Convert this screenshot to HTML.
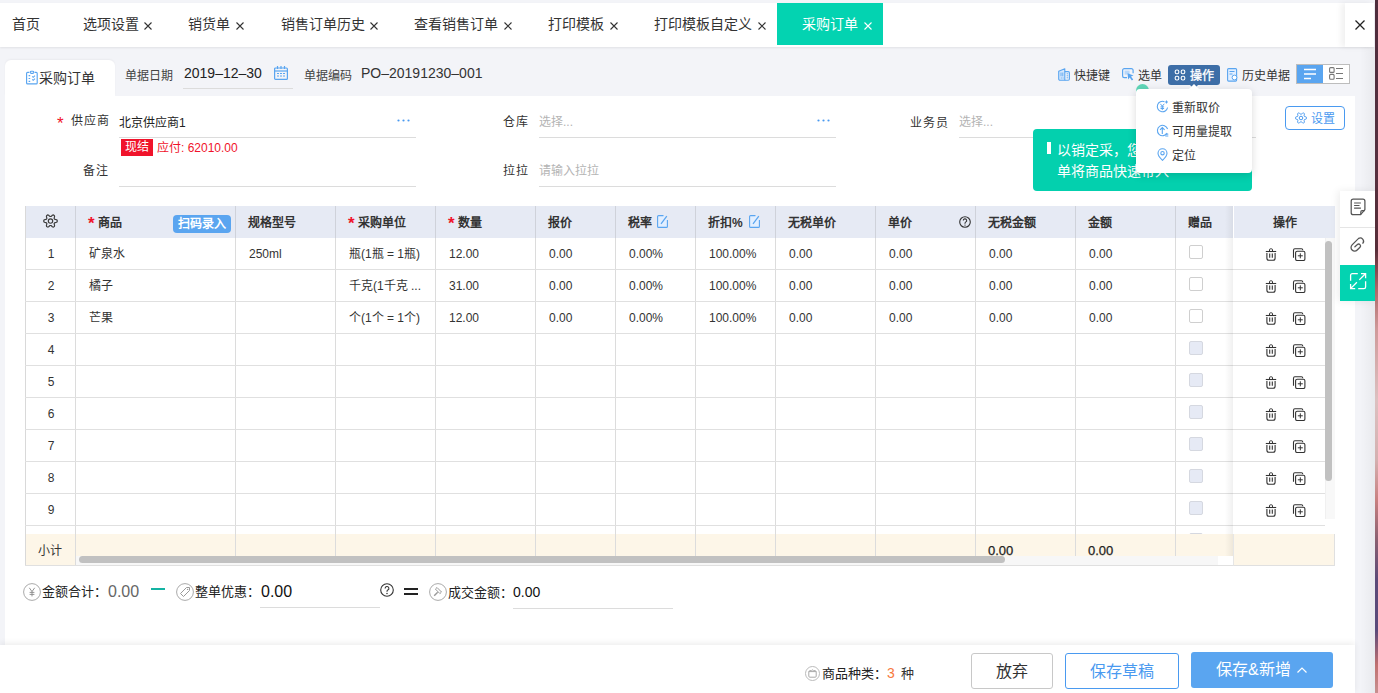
<!DOCTYPE html>
<html lang="zh-CN"><head><meta charset="utf-8">
<style>
*{box-sizing:border-box;margin:0;padding:0}
html,body{width:1378px;height:693px;overflow:hidden}
body{position:relative;background:#f3f4f8;font-family:"Liberation Sans",sans-serif;color:#333;font-size:12px}
.a{position:absolute;white-space:nowrap}
svg{display:block}
#tabbar{left:0;top:3px;width:1374px;height:44px;background:#fff;box-shadow:0 1px 2px rgba(0,0,0,.08)}
.tab{position:absolute;top:14px;font-size:14px;line-height:20px;color:#333}
.x{position:absolute;top:22px;width:8px;height:8px}
#acttab{left:777px;top:3px;width:106px;height:42px;background:#03d3b1}
#closebtn{left:1345px;top:3px;width:29px;height:44px;background:#fff;box-shadow:-4px 0 6px rgba(0,0,0,.06)}
#strip{left:1375px;top:0;width:3px;height:693px;background:linear-gradient(#4e2c3c 0,#55303f 150px,#5a2e3a 250px,#b06a6a 290px,#cf9a9a 330px,#dcc0c0 400px,#d4b0b0 460px,#c88080 500px,#8a6070 540px,#5c4a78 580px,#5a4a7a 630px,#c07070 665px,#c89090 693px)}
#subtab{left:5px;top:60px;width:110px;height:36px;background:#fff;border-radius:6px 6px 0 0;box-shadow:0 -1px 2px rgba(0,0,0,.04)}
#panel{left:5px;top:96px;width:1350px;height:560px;background:#fff}
#footer{left:0;top:645px;width:1355px;height:48px;background:#fff;box-shadow:0 -2px 6px rgba(0,0,0,.07)}
.lbl{font-size:12px;color:#333}
.uline{position:absolute;height:1px;background:#dcdcdc}
.ph{color:#b4b4b4;font-size:12px}
/* table */
.hdr{background:#e6eaf4}
.vl{position:absolute;width:1px;background:#dcdcdc}
.hl{position:absolute;height:1px;background:#e0e0e0}
.th{position:absolute;font-size:12px;font-weight:bold;color:#333;line-height:16px}
.td{position:absolute;font-size:12px;color:#333;line-height:16px}
.req{color:#f0132b}
.cb{position:absolute;width:14px;height:14px;border:1px solid #cfcfcf;border-radius:2px;background:#fff}
.cbd{background:#e6eaf5;border-color:#d5d8e0}
</style></head><body>

<!-- tab bar -->
<div id="tabbar" class="a"></div>
<div class="a tab" style="left:12px">首页</div>
<div class="a tab" style="left:83px">选项设置</div>
<div class="a tab" style="left:188px">销货单</div>
<div class="a tab" style="left:281px">销售订单历史</div>
<div class="a tab" style="left:414px">查看销售订单</div>
<div class="a tab" style="left:548px">打印模板</div>
<div class="a tab" style="left:654px">打印模板自定义</div>
<div id="acttab" class="a"></div>
<div class="a tab" style="left:802px;color:#fff">采购订单</div>
<svg class="a x" style="left:144px" viewBox="0 0 8 8"><path d="M0.5 .5L7.5 7.5M7.5 .5L.5 7.5" stroke="#333" stroke-width="1.1"/></svg>
<svg class="a x" style="left:236px" viewBox="0 0 8 8"><path d="M0.5 .5L7.5 7.5M7.5 .5L.5 7.5" stroke="#333" stroke-width="1.1"/></svg>
<svg class="a x" style="left:370px" viewBox="0 0 8 8"><path d="M0.5 .5L7.5 7.5M7.5 .5L.5 7.5" stroke="#333" stroke-width="1.1"/></svg>
<svg class="a x" style="left:504px" viewBox="0 0 8 8"><path d="M0.5 .5L7.5 7.5M7.5 .5L.5 7.5" stroke="#333" stroke-width="1.1"/></svg>
<svg class="a x" style="left:610px" viewBox="0 0 8 8"><path d="M0.5 .5L7.5 7.5M7.5 .5L.5 7.5" stroke="#333" stroke-width="1.1"/></svg>
<svg class="a x" style="left:758px" viewBox="0 0 8 8"><path d="M0.5 .5L7.5 7.5M7.5 .5L.5 7.5" stroke="#333" stroke-width="1.1"/></svg>
<svg class="a x" style="left:864px" viewBox="0 0 8 8"><path d="M0.5 .5L7.5 7.5M7.5 .5L.5 7.5" stroke="#fff" stroke-width="1.1"/></svg>
<div id="closebtn" class="a"></div>
<svg class="a" style="left:1355px;top:20px;width:10px;height:10px" viewBox="0 0 10 10"><path d="M.5 .5L9.5 9.5M9.5 .5L.5 9.5" stroke="#222" stroke-width="1.3"/></svg>
<div class="a" style="left:1360px;top:47px;width:15px;height:646px;background:linear-gradient(to right,rgba(0,0,0,0),rgba(0,0,0,.045))"></div>
<div id="strip" class="a"></div>

<!-- sub tab + info row -->
<div id="subtab" class="a"></div>
<div id="panel" class="a"></div>
<div id="footer" class="a"></div>


<!-- sub tab content -->
<svg class="a" style="left:20px;top:64px;width:30px;height:26px" viewBox="0 0 30 26"><path d="M9.3 8.3H7.6a1 1 0 0 0-1 1v9.6a1 1 0 0 0 1 1h8.6a1 1 0 0 0 1-1V9.3a1 1 0 0 0-1-1h-1.6" fill="none" stroke="#5aa5f0" stroke-width="1.15"/><rect x="10.3" y="7.2" width="3.4" height="2.2" rx=".9" fill="none" stroke="#5aa5f0" stroke-width="1.1"/><path d="M8.6 11.6h1.6M8.6 14.5h1.6M8.6 17.4h1.6" stroke="#5aa5f0" stroke-width="1.1"/><path d="M12.2 12.4l1 .9 1.8-1.6M12.2 15.4l1 .9 1.8-1.6" fill="none" stroke="#5aa5f0" stroke-width="1.1"/></svg>
<div class="a" style="left:39px;top:68px;font-size:14px;line-height:20px;color:#333">采购订单</div>

<div class="a lbl" style="left:125px;top:68px;line-height:16px;color:#444">单据日期</div>
<div class="a" style="left:184px;top:64px;font-size:14px;line-height:18px;color:#222">2019–12–30</div>
<svg class="a" style="left:274px;top:66px;width:14px;height:14px" viewBox="0 0 14 14"><rect x=".6" y="2" width="12.8" height="11.4" rx="1" fill="none" stroke="#5aa5f0" stroke-width="1.2"/><path d="M.6 5h12.8" stroke="#5aa5f0" stroke-width="1.2"/><path d="M3.5 0v3M10.5 0v3M7 0v3" stroke="#5aa5f0" stroke-width="1.2"/><path d="M3 7.5h2M6 7.5h2M9 7.5h2M3 10h2M6 10h2M9 10h2" stroke="#5aa5f0" stroke-width="1"/></svg>
<div class="uline" style="left:183px;top:88px;width:110px"></div>
<div class="a lbl" style="left:304px;top:68px;line-height:16px;color:#444">单据编码</div>
<div class="a" style="left:361px;top:64px;font-size:14px;line-height:18px;color:#333">PO–20191230–001</div>

<!-- toolbar -->
<svg class="a" style="left:1058px;top:68px;width:12px;height:13px" viewBox="0 0 12 13"><path d="M.7 3.2L6.8.8v11.5H1.9a1.2 1.2 0 0 1-1.2-1.2z" fill="#d6e8fd" stroke="#5aa5f0" stroke-width="1.1" stroke-linejoin="round"/><path d="M6.8 3.6h3.4a1.2 1.2 0 0 1 1.2 1.2v6.3a1.2 1.2 0 0 1-1.2 1.2H6.8" fill="none" stroke="#5aa5f0" stroke-width="1.1"/><path d="M3 4.5v3.8M4.8 4.5v3.8M2.8 10h1M4.6 10h1M8.6 5.8h1.6M8.6 7.8h1.6M8.6 9.8h1.6" stroke="#5aa5f0" stroke-width=".9"/></svg>
<div class="a lbl" style="left:1074px;top:68px;line-height:16px">快捷键</div>
<svg class="a" style="left:1122px;top:68px;width:12px;height:13px" viewBox="0 0 12 13"><path d="M5 9.6H2.3A1.7 1.7 0 0 1 .6 7.9V2.3A1.7 1.7 0 0 1 2.3.6h7.1a1.7 1.7 0 0 1 1.7 1.7v3" fill="none" stroke="#5aa5f0" stroke-width="1.2"/><rect x="2.6" y="2.6" width="5" height="4" fill="#b9d8fa"/><path d="M5.6 5.2l5.9 2.4-2.5.9 2.2 2.9-1.3 1-2.2-2.9-1.6 1.9z" fill="#5aa5f0"/></svg>
<div class="a lbl" style="left:1138px;top:68px;line-height:16px">选单</div>
<div class="a" style="left:1168px;top:65px;width:52px;height:20px;background:#3d6ea7;border-radius:3px"></div>
<svg class="a" style="left:1189px;top:84px;width:10px;height:5px" viewBox="0 0 10 5"><path d="M0 0h10L5 5z" fill="#3d6ea7"/></svg>
<svg class="a" style="left:1174px;top:69px;width:12px;height:12px" viewBox="0 0 12 12"><g fill="none" stroke="#fff" stroke-width="1.1"><rect x="1.2" y="1" width="3.6" height="3.8" rx="1.5"/><rect x="7.2" y="1" width="3.6" height="3.8" rx="1.5"/><rect x="1.2" y="7.2" width="3.6" height="3.8" rx="1.5"/><rect x="7.2" y="7.2" width="3.6" height="3.8" rx="1.5"/></g></svg>
<div class="a" style="left:1190px;top:68px;font-size:12px;line-height:16px;color:#fff;-webkit-text-stroke:.35px #fff">操作</div>
<svg class="a" style="left:1227px;top:68px;width:11px;height:14px" viewBox="0 0 11 14"><rect x=".6" y=".6" width="9" height="12.5" rx="1" fill="#e3efff" stroke="#5aa5f0" stroke-width="1.1"/><path d="M2.5 3.5h5M2.5 6h3" stroke="#5aa5f0" stroke-width="1"/><circle cx="7.5" cy="9.5" r="2.4" fill="#fff" stroke="#5aa5f0" stroke-width="1"/></svg>
<div class="a lbl" style="left:1242px;top:68px;line-height:16px">历史单据</div>
<div class="a" style="left:1296px;top:64px;width:54px;height:20px;border:1px solid #bdbdbd;background:#fff"></div>
<div class="a" style="left:1297px;top:65px;width:26px;height:18px;background:#5aa5f0"></div>
<svg class="a" style="left:1303px;top:68px;width:14px;height:12px" viewBox="0 0 14 12"><path d="M1 1.5h12M1 6h12M1 10.5h7" stroke="#fff" stroke-width="1.3"/></svg>
<svg class="a" style="left:1329px;top:67px;width:15px;height:13px" viewBox="0 0 15 13"><g fill="none" stroke="#777" stroke-width="1.1"><rect x=".6" y=".6" width="4.5" height="4.8" rx="1"/><rect x=".6" y="7.4" width="4.5" height="4.8" rx="1"/></g><path d="M7 1.5h7M7 6.5h7M7 11.5h7" stroke="#777" stroke-width="1.1"/></svg>

<!-- form -->
<div class="a req" style="left:57px;top:116px;font-size:17px;line-height:16px">*</div>
<div class="a lbl" style="left:71px;top:113px;line-height:16px;letter-spacing:1px">供应商</div>
<div class="a" style="left:119px;top:115px;font-size:12px;line-height:16px;color:#222">北京供应商1</div>
<svg class="a" style="left:397px;top:119px;width:13px;height:3px" viewBox="0 0 13 3"><circle cx="1.5" cy="1.5" r="1.1" fill="#4a9af0"/><circle cx="6.5" cy="1.5" r="1.1" fill="#4a9af0"/><circle cx="11.5" cy="1.5" r="1.1" fill="#4a9af0"/></svg>
<div class="uline" style="left:119px;top:137px;width:297px"></div>
<div class="a" style="left:121px;top:139px;width:32px;height:17px;background:#f0132b;color:#fff;font-size:12px;line-height:17px;text-align:center">现结</div>
<div class="a" style="left:157px;top:140px;font-size:12px;line-height:16px;color:#f0132b">应付: 62010.00</div>
<div class="a lbl" style="left:83px;top:163px;line-height:16px;letter-spacing:1px">备注</div>
<div class="uline" style="left:119px;top:186px;width:297px"></div>

<div class="a lbl" style="left:503px;top:114px;line-height:16px;letter-spacing:1px">仓库</div>
<div class="a ph" style="left:539px;top:114px;line-height:16px">选择...</div>
<svg class="a" style="left:817px;top:119px;width:13px;height:3px" viewBox="0 0 13 3"><circle cx="1.5" cy="1.5" r="1.1" fill="#4a9af0"/><circle cx="6.5" cy="1.5" r="1.1" fill="#4a9af0"/><circle cx="11.5" cy="1.5" r="1.1" fill="#4a9af0"/></svg>
<div class="uline" style="left:539px;top:137px;width:297px"></div>
<div class="a lbl" style="left:503px;top:163px;line-height:16px;letter-spacing:1px">拉拉</div>
<div class="a ph" style="left:539px;top:163px;line-height:16px">请输入拉拉</div>
<div class="uline" style="left:539px;top:186px;width:297px"></div>

<div class="a lbl" style="left:910px;top:115px;line-height:16px;letter-spacing:1px">业务员</div>
<div class="a ph" style="left:959px;top:114px;line-height:16px">选择...</div>
<div class="uline" style="left:959px;top:137px;width:297px"></div>

<div class="a" style="left:1285px;top:106px;width:60px;height:24px;border:1px solid #4a9af0;border-radius:4px"></div>
<svg class="a" style="left:1295px;top:112px;width:12px;height:12px" viewBox="0 0 12 12"><path d="M11.6 6.0L11.6 6.6L11.0 7.1L10.1 7.3L9.5 7.5L9.3 7.9L9.1 8.2L9.2 8.9L9.4 9.8L9.3 10.5L8.8 10.8L8.3 11.1L7.6 10.9L6.9 10.2L6.4 9.8L6.0 9.8L5.6 9.8L5.1 10.2L4.4 10.9L3.7 11.1L3.2 10.8L2.7 10.5L2.6 9.8L2.8 8.9L2.9 8.2L2.7 7.9L2.5 7.5L1.9 7.3L1.0 7.1L0.4 6.6L0.4 6.0L0.4 5.4L1.0 4.9L1.9 4.7L2.5 4.5L2.7 4.1L2.9 3.8L2.8 3.1L2.6 2.2L2.7 1.5L3.2 1.2L3.7 0.9L4.4 1.1L5.1 1.8L5.6 2.2L6.0 2.2L6.4 2.2L6.9 1.8L7.6 1.1L8.3 0.9L8.8 1.2L9.3 1.5L9.4 2.2L9.2 3.1L9.1 3.8L9.3 4.1L9.5 4.5L10.1 4.7L11.0 4.9L11.6 5.4Z" stroke-linejoin="round" fill="none" stroke="#4a9af0" stroke-width="1"/><circle cx="6" cy="6" r="1.8" fill="none" stroke="#4a9af0" stroke-width="1"/></svg>
<div class="a" style="left:1311px;top:111px;font-size:12px;line-height:16px;color:#4a9af0">设置</div>

<!-- TABLE -->
<div class="a hdr" style="left:25px;top:206px;width:1310px;height:32px"></div>
<div class="vl" style="left:75px;top:206px;height:32px;background:#cfd2da"></div>
<div class="vl" style="left:235px;top:206px;height:32px;background:#cfd2da"></div>
<div class="vl" style="left:335px;top:206px;height:32px;background:#cfd2da"></div>
<div class="vl" style="left:435px;top:206px;height:32px;background:#cfd2da"></div>
<div class="vl" style="left:535px;top:206px;height:32px;background:#cfd2da"></div>
<div class="vl" style="left:615px;top:206px;height:32px;background:#cfd2da"></div>
<div class="vl" style="left:695px;top:206px;height:32px;background:#cfd2da"></div>
<div class="vl" style="left:775px;top:206px;height:32px;background:#cfd2da"></div>
<div class="vl" style="left:875px;top:206px;height:32px;background:#cfd2da"></div>
<div class="vl" style="left:975px;top:206px;height:32px;background:#cfd2da"></div>
<div class="vl" style="left:1075px;top:206px;height:32px;background:#cfd2da"></div>
<div class="vl" style="left:1175px;top:206px;height:32px;background:#cfd2da"></div>
<div class="vl" style="left:25px;top:206px;height:360px;background:#d9d9d9"></div>
<div class="vl" style="left:75px;top:238px;height:296px"></div>
<div class="vl" style="left:235px;top:238px;height:296px"></div>
<div class="vl" style="left:335px;top:238px;height:296px"></div>
<div class="vl" style="left:435px;top:238px;height:296px"></div>
<div class="vl" style="left:535px;top:238px;height:296px"></div>
<div class="vl" style="left:615px;top:238px;height:296px"></div>
<div class="vl" style="left:695px;top:238px;height:296px"></div>
<div class="vl" style="left:775px;top:238px;height:296px"></div>
<div class="vl" style="left:875px;top:238px;height:296px"></div>
<div class="vl" style="left:975px;top:238px;height:296px"></div>
<div class="vl" style="left:1075px;top:238px;height:296px"></div>
<div class="vl" style="left:1175px;top:238px;height:296px"></div>
<div class="hl" style="left:25px;top:269px;width:1208px"></div>
<div class="hl" style="left:25px;top:301px;width:1208px"></div>
<div class="hl" style="left:25px;top:333px;width:1208px"></div>
<div class="hl" style="left:25px;top:365px;width:1208px"></div>
<div class="hl" style="left:25px;top:397px;width:1208px"></div>
<div class="hl" style="left:25px;top:429px;width:1208px"></div>
<div class="hl" style="left:25px;top:461px;width:1208px"></div>
<div class="hl" style="left:25px;top:493px;width:1208px"></div>
<div class="hl" style="left:25px;top:525px;width:1208px"></div>
<svg class="a" style="left:43px;top:214px;width:15px;height:14px" viewBox="0 0 15 14"><path d="M14.2 7.0L14.2 7.7L13.5 8.3L12.3 8.6L11.6 8.8L11.4 9.2L11.1 9.6L11.3 10.4L11.6 11.5L11.4 12.4L10.9 12.8L10.2 13.1L9.4 12.8L8.6 12.0L8.0 11.5L7.5 11.5L7.0 11.5L6.4 12.0L5.6 12.8L4.8 13.1L4.2 12.8L3.6 12.4L3.4 11.5L3.7 10.4L3.9 9.6L3.6 9.2L3.4 8.8L2.7 8.6L1.5 8.3L0.8 7.7L0.8 7.0L0.8 6.3L1.5 5.7L2.7 5.4L3.4 5.2L3.6 4.8L3.9 4.4L3.7 3.6L3.4 2.5L3.6 1.6L4.1 1.2L4.8 0.9L5.6 1.2L6.4 2.0L7.0 2.5L7.5 2.5L8.0 2.5L8.6 2.0L9.4 1.2L10.2 0.9L10.9 1.2L11.4 1.6L11.6 2.5L11.3 3.6L11.1 4.4L11.4 4.8L11.6 5.2L12.3 5.4L13.5 5.7L14.2 6.3Z" fill="none" stroke="#3a3a3a" stroke-width="1.15" stroke-linejoin="round"/><circle cx="7.5" cy="7" r="2.2" fill="none" stroke="#3a3a3a" stroke-width="1.15"/></svg>
<div class="th req" style="left:88px;top:216px;font-size:17px;font-weight:bold">*</div>
<div class="th" style="left:98px;top:215px">商品</div>
<div class="a" style="left:173px;top:215px;width:58px;height:18px;background:#5aa5f0;border-radius:4px;color:#fff;font-size:12px;font-weight:bold;line-height:18px;text-align:center">扫码录入</div>
<div class="th" style="left:248px;top:215px">规格型号</div>
<div class="th req" style="left:348px;top:216px;font-size:17px;font-weight:bold">*</div>
<div class="th" style="left:358px;top:215px">采购单位</div>
<div class="th req" style="left:448px;top:216px;font-size:17px;font-weight:bold">*</div>
<div class="th" style="left:458px;top:215px">数量</div>
<div class="th" style="left:548px;top:215px">报价</div>
<div class="th" style="left:628px;top:215px">税率</div>
<svg class="a" style="left:657px;top:215px;width:11px;height:13px" viewBox="0 0 11 13"><path d="M6.5 .6H1.6a1 1 0 0 0-1 1v9.8a1 1 0 0 0 1 1h7.8a1 1 0 0 0 1-1V5" fill="#e3efff" stroke="#5aa5f0" stroke-width="1.1"/><path d="M9.8 1.2L4 8.8" stroke="#5aa5f0" stroke-width="1.3"/></svg>
<div class="th" style="left:708px;top:215px">折扣%</div>
<svg class="a" style="left:749px;top:215px;width:11px;height:13px" viewBox="0 0 11 13"><path d="M6.5 .6H1.6a1 1 0 0 0-1 1v9.8a1 1 0 0 0 1 1h7.8a1 1 0 0 0 1-1V5" fill="#e3efff" stroke="#5aa5f0" stroke-width="1.1"/><path d="M9.8 1.2L4 8.8" stroke="#5aa5f0" stroke-width="1.3"/></svg>
<div class="th" style="left:788px;top:215px">无税单价</div>
<div class="th" style="left:888px;top:215px">单价</div>
<svg class="a" style="left:959px;top:216px;width:12px;height:12px" viewBox="0 0 12 12"><circle cx="6" cy="6" r="5.3" fill="none" stroke="#333" stroke-width="1.1"/><path d="M4.3 4.6a1.7 1.7 0 1 1 2.4 1.5c-.5.3-.7.6-.7 1.2v.4" fill="none" stroke="#333" stroke-width="1.1"/><circle cx="6" cy="9.1" r=".7" fill="#333"/></svg>
<div class="th" style="left:988px;top:215px">无税金额</div>
<div class="th" style="left:1088px;top:215px">金额</div>
<div class="th" style="left:1188px;top:215px">赠品</div>
<div class="td" style="left:26px;width:50px;text-align:center;top:246px">1</div>
<div class="td" style="left:89px;top:246px">矿泉水</div>
<div class="td" style="left:249px;top:246px">250ml</div>
<div class="td" style="left:349px;top:246px">瓶(1瓶 = 1瓶)</div>
<div class="td" style="left:449px;top:246px">12.00</div>
<div class="td" style="left:549px;top:246px">0.00</div>
<div class="td" style="left:629px;top:246px">0.00%</div>
<div class="td" style="left:709px;top:246px">100.00%</div>
<div class="td" style="left:789px;top:246px">0.00</div>
<div class="td" style="left:889px;top:246px">0.00</div>
<div class="td" style="left:989px;top:246px">0.00</div>
<div class="td" style="left:1089px;top:246px">0.00</div>
<div class="cb" style="left:1189px;top:245px"></div>
<div class="td" style="left:26px;width:50px;text-align:center;top:278px">2</div>
<div class="td" style="left:89px;top:278px">橘子</div>
<div class="td" style="left:349px;top:278px">千克(1千克 ...</div>
<div class="td" style="left:449px;top:278px">31.00</div>
<div class="td" style="left:549px;top:278px">0.00</div>
<div class="td" style="left:629px;top:278px">0.00%</div>
<div class="td" style="left:709px;top:278px">100.00%</div>
<div class="td" style="left:789px;top:278px">0.00</div>
<div class="td" style="left:889px;top:278px">0.00</div>
<div class="td" style="left:989px;top:278px">0.00</div>
<div class="td" style="left:1089px;top:278px">0.00</div>
<div class="cb" style="left:1189px;top:277px"></div>
<div class="td" style="left:26px;width:50px;text-align:center;top:310px">3</div>
<div class="td" style="left:89px;top:310px">芒果</div>
<div class="td" style="left:349px;top:310px">个(1个 = 1个)</div>
<div class="td" style="left:449px;top:310px">12.00</div>
<div class="td" style="left:549px;top:310px">0.00</div>
<div class="td" style="left:629px;top:310px">0.00%</div>
<div class="td" style="left:709px;top:310px">100.00%</div>
<div class="td" style="left:789px;top:310px">0.00</div>
<div class="td" style="left:889px;top:310px">0.00</div>
<div class="td" style="left:989px;top:310px">0.00</div>
<div class="td" style="left:1089px;top:310px">0.00</div>
<div class="cb" style="left:1189px;top:309px"></div>
<div class="td" style="left:26px;width:50px;text-align:center;top:342px">4</div>
<div class="cb cbd" style="left:1189px;top:341px"></div>
<div class="td" style="left:26px;width:50px;text-align:center;top:374px">5</div>
<div class="cb cbd" style="left:1189px;top:373px"></div>
<div class="td" style="left:26px;width:50px;text-align:center;top:406px">6</div>
<div class="cb cbd" style="left:1189px;top:405px"></div>
<div class="td" style="left:26px;width:50px;text-align:center;top:438px">7</div>
<div class="cb cbd" style="left:1189px;top:437px"></div>
<div class="td" style="left:26px;width:50px;text-align:center;top:470px">8</div>
<div class="cb cbd" style="left:1189px;top:469px"></div>
<div class="td" style="left:26px;width:50px;text-align:center;top:502px">9</div>
<div class="cb cbd" style="left:1189px;top:501px"></div>
<div class="a" style="left:25px;top:526px;width:1208px;height:8px;overflow:hidden"><div class="cb cbd" style="left:1164px;top:7px"></div></div>
<div class="a" style="left:26px;top:534px;width:1207px;height:32px;background:#fdf6e8"></div>
<div class="vl" style="left:75px;top:534px;height:22px;background:#dcdcdc"></div>
<div class="vl" style="left:235px;top:534px;height:22px;background:#dcdcdc"></div>
<div class="vl" style="left:335px;top:534px;height:22px;background:#dcdcdc"></div>
<div class="vl" style="left:435px;top:534px;height:22px;background:#dcdcdc"></div>
<div class="vl" style="left:535px;top:534px;height:22px;background:#dcdcdc"></div>
<div class="vl" style="left:615px;top:534px;height:22px;background:#dcdcdc"></div>
<div class="vl" style="left:695px;top:534px;height:22px;background:#dcdcdc"></div>
<div class="vl" style="left:775px;top:534px;height:22px;background:#dcdcdc"></div>
<div class="vl" style="left:875px;top:534px;height:22px;background:#dcdcdc"></div>
<div class="vl" style="left:975px;top:534px;height:22px;background:#dcdcdc"></div>
<div class="vl" style="left:1075px;top:534px;height:22px;background:#dcdcdc"></div>
<div class="vl" style="left:1175px;top:534px;height:22px;background:#dcdcdc"></div>
<div class="vl" style="left:75px;top:534px;height:32px;background:#dcdcdc"></div>
<div class="td" style="left:25px;width:50px;text-align:center;top:543px">小计</div>
<div class="td" style="left:988px;top:543px;font-weight:normal;font-size:13px;color:#222;-webkit-text-stroke:.25px #222">0.00</div>
<div class="td" style="left:1088px;top:543px;font-weight:normal;font-size:13px;color:#222;-webkit-text-stroke:.25px #222">0.00</div>
<div class="a" style="left:76px;top:556px;width:1142px;height:9px;background:#f7f7f7"></div>
<div class="a" style="left:1218px;top:556px;width:15px;height:9px;background:#fff"></div>
<div class="a" style="left:79px;top:556px;width:926px;height:7px;background:#c1c1c1;border-radius:4px"></div>
<div class="hl" style="left:25px;top:565px;width:1310px;background:#e0e0e0"></div>
<div class="a" style="left:1233px;top:206px;width:102px;height:360px;background:#fff"></div>
<div class="a" style="left:1225px;top:206px;width:8px;height:350px;background:linear-gradient(to right,rgba(0,0,0,0),rgba(0,0,0,.06))"></div>
<div class="a hdr" style="left:1234px;top:206px;width:101px;height:32px"></div>
<div class="th" style="left:1273px;top:215px">操作</div>
<div class="hl" style="left:1233px;top:269px;width:92px"></div>
<div class="hl" style="left:1233px;top:301px;width:92px"></div>
<div class="hl" style="left:1233px;top:333px;width:92px"></div>
<div class="hl" style="left:1233px;top:365px;width:92px"></div>
<div class="hl" style="left:1233px;top:397px;width:92px"></div>
<div class="hl" style="left:1233px;top:429px;width:92px"></div>
<div class="hl" style="left:1233px;top:461px;width:92px"></div>
<div class="hl" style="left:1233px;top:493px;width:92px"></div>
<div class="hl" style="left:1233px;top:525px;width:92px"></div>
<svg class="a" style="left:1265px;top:248px;width:12px;height:13px" viewBox="0 0 12 13"><path d="M.8 3.5h10.4" stroke="#333" stroke-width="1.1"/><path d="M4.5 3.3V1.8a1 1 0 0 1 1-1h1a1 1 0 0 1 1 1v1.5" fill="none" stroke="#333" stroke-width="1"/><path d="M1.9 5v5.2a2 2 0 0 0 2 2h4.2a2 2 0 0 0 2-2V5" fill="none" stroke="#333" stroke-width="1.1"/><path d="M4.7 5.6v4.2M7.3 5.6v4.2" stroke="#333" stroke-width="1.1"/></svg>
<svg class="a" style="left:1292px;top:248px;width:14px;height:13px" viewBox="0 0 14 13"><path d="M1.5 9.8V2.2a1.4 1.4 0 0 1 1.4-1.4h6.5a1.4 1.4 0 0 1 1.4 1.4" fill="none" stroke="#333" stroke-width="1.1"/><rect x="3.6" y="3.2" width="9.3" height="9.3" rx="1.6" fill="#fff" stroke="#333" stroke-width="1.1"/><path d="M5.8 7.8h5M8.3 5.3v5" stroke="#333" stroke-width="1"/></svg>
<svg class="a" style="left:1265px;top:280px;width:12px;height:13px" viewBox="0 0 12 13"><path d="M.8 3.5h10.4" stroke="#333" stroke-width="1.1"/><path d="M4.5 3.3V1.8a1 1 0 0 1 1-1h1a1 1 0 0 1 1 1v1.5" fill="none" stroke="#333" stroke-width="1"/><path d="M1.9 5v5.2a2 2 0 0 0 2 2h4.2a2 2 0 0 0 2-2V5" fill="none" stroke="#333" stroke-width="1.1"/><path d="M4.7 5.6v4.2M7.3 5.6v4.2" stroke="#333" stroke-width="1.1"/></svg>
<svg class="a" style="left:1292px;top:280px;width:14px;height:13px" viewBox="0 0 14 13"><path d="M1.5 9.8V2.2a1.4 1.4 0 0 1 1.4-1.4h6.5a1.4 1.4 0 0 1 1.4 1.4" fill="none" stroke="#333" stroke-width="1.1"/><rect x="3.6" y="3.2" width="9.3" height="9.3" rx="1.6" fill="#fff" stroke="#333" stroke-width="1.1"/><path d="M5.8 7.8h5M8.3 5.3v5" stroke="#333" stroke-width="1"/></svg>
<svg class="a" style="left:1265px;top:312px;width:12px;height:13px" viewBox="0 0 12 13"><path d="M.8 3.5h10.4" stroke="#333" stroke-width="1.1"/><path d="M4.5 3.3V1.8a1 1 0 0 1 1-1h1a1 1 0 0 1 1 1v1.5" fill="none" stroke="#333" stroke-width="1"/><path d="M1.9 5v5.2a2 2 0 0 0 2 2h4.2a2 2 0 0 0 2-2V5" fill="none" stroke="#333" stroke-width="1.1"/><path d="M4.7 5.6v4.2M7.3 5.6v4.2" stroke="#333" stroke-width="1.1"/></svg>
<svg class="a" style="left:1292px;top:312px;width:14px;height:13px" viewBox="0 0 14 13"><path d="M1.5 9.8V2.2a1.4 1.4 0 0 1 1.4-1.4h6.5a1.4 1.4 0 0 1 1.4 1.4" fill="none" stroke="#333" stroke-width="1.1"/><rect x="3.6" y="3.2" width="9.3" height="9.3" rx="1.6" fill="#fff" stroke="#333" stroke-width="1.1"/><path d="M5.8 7.8h5M8.3 5.3v5" stroke="#333" stroke-width="1"/></svg>
<svg class="a" style="left:1265px;top:344px;width:12px;height:13px" viewBox="0 0 12 13"><path d="M.8 3.5h10.4" stroke="#333" stroke-width="1.1"/><path d="M4.5 3.3V1.8a1 1 0 0 1 1-1h1a1 1 0 0 1 1 1v1.5" fill="none" stroke="#333" stroke-width="1"/><path d="M1.9 5v5.2a2 2 0 0 0 2 2h4.2a2 2 0 0 0 2-2V5" fill="none" stroke="#333" stroke-width="1.1"/><path d="M4.7 5.6v4.2M7.3 5.6v4.2" stroke="#333" stroke-width="1.1"/></svg>
<svg class="a" style="left:1292px;top:344px;width:14px;height:13px" viewBox="0 0 14 13"><path d="M1.5 9.8V2.2a1.4 1.4 0 0 1 1.4-1.4h6.5a1.4 1.4 0 0 1 1.4 1.4" fill="none" stroke="#333" stroke-width="1.1"/><rect x="3.6" y="3.2" width="9.3" height="9.3" rx="1.6" fill="#fff" stroke="#333" stroke-width="1.1"/><path d="M5.8 7.8h5M8.3 5.3v5" stroke="#333" stroke-width="1"/></svg>
<svg class="a" style="left:1265px;top:376px;width:12px;height:13px" viewBox="0 0 12 13"><path d="M.8 3.5h10.4" stroke="#333" stroke-width="1.1"/><path d="M4.5 3.3V1.8a1 1 0 0 1 1-1h1a1 1 0 0 1 1 1v1.5" fill="none" stroke="#333" stroke-width="1"/><path d="M1.9 5v5.2a2 2 0 0 0 2 2h4.2a2 2 0 0 0 2-2V5" fill="none" stroke="#333" stroke-width="1.1"/><path d="M4.7 5.6v4.2M7.3 5.6v4.2" stroke="#333" stroke-width="1.1"/></svg>
<svg class="a" style="left:1292px;top:376px;width:14px;height:13px" viewBox="0 0 14 13"><path d="M1.5 9.8V2.2a1.4 1.4 0 0 1 1.4-1.4h6.5a1.4 1.4 0 0 1 1.4 1.4" fill="none" stroke="#333" stroke-width="1.1"/><rect x="3.6" y="3.2" width="9.3" height="9.3" rx="1.6" fill="#fff" stroke="#333" stroke-width="1.1"/><path d="M5.8 7.8h5M8.3 5.3v5" stroke="#333" stroke-width="1"/></svg>
<svg class="a" style="left:1265px;top:408px;width:12px;height:13px" viewBox="0 0 12 13"><path d="M.8 3.5h10.4" stroke="#333" stroke-width="1.1"/><path d="M4.5 3.3V1.8a1 1 0 0 1 1-1h1a1 1 0 0 1 1 1v1.5" fill="none" stroke="#333" stroke-width="1"/><path d="M1.9 5v5.2a2 2 0 0 0 2 2h4.2a2 2 0 0 0 2-2V5" fill="none" stroke="#333" stroke-width="1.1"/><path d="M4.7 5.6v4.2M7.3 5.6v4.2" stroke="#333" stroke-width="1.1"/></svg>
<svg class="a" style="left:1292px;top:408px;width:14px;height:13px" viewBox="0 0 14 13"><path d="M1.5 9.8V2.2a1.4 1.4 0 0 1 1.4-1.4h6.5a1.4 1.4 0 0 1 1.4 1.4" fill="none" stroke="#333" stroke-width="1.1"/><rect x="3.6" y="3.2" width="9.3" height="9.3" rx="1.6" fill="#fff" stroke="#333" stroke-width="1.1"/><path d="M5.8 7.8h5M8.3 5.3v5" stroke="#333" stroke-width="1"/></svg>
<svg class="a" style="left:1265px;top:440px;width:12px;height:13px" viewBox="0 0 12 13"><path d="M.8 3.5h10.4" stroke="#333" stroke-width="1.1"/><path d="M4.5 3.3V1.8a1 1 0 0 1 1-1h1a1 1 0 0 1 1 1v1.5" fill="none" stroke="#333" stroke-width="1"/><path d="M1.9 5v5.2a2 2 0 0 0 2 2h4.2a2 2 0 0 0 2-2V5" fill="none" stroke="#333" stroke-width="1.1"/><path d="M4.7 5.6v4.2M7.3 5.6v4.2" stroke="#333" stroke-width="1.1"/></svg>
<svg class="a" style="left:1292px;top:440px;width:14px;height:13px" viewBox="0 0 14 13"><path d="M1.5 9.8V2.2a1.4 1.4 0 0 1 1.4-1.4h6.5a1.4 1.4 0 0 1 1.4 1.4" fill="none" stroke="#333" stroke-width="1.1"/><rect x="3.6" y="3.2" width="9.3" height="9.3" rx="1.6" fill="#fff" stroke="#333" stroke-width="1.1"/><path d="M5.8 7.8h5M8.3 5.3v5" stroke="#333" stroke-width="1"/></svg>
<svg class="a" style="left:1265px;top:472px;width:12px;height:13px" viewBox="0 0 12 13"><path d="M.8 3.5h10.4" stroke="#333" stroke-width="1.1"/><path d="M4.5 3.3V1.8a1 1 0 0 1 1-1h1a1 1 0 0 1 1 1v1.5" fill="none" stroke="#333" stroke-width="1"/><path d="M1.9 5v5.2a2 2 0 0 0 2 2h4.2a2 2 0 0 0 2-2V5" fill="none" stroke="#333" stroke-width="1.1"/><path d="M4.7 5.6v4.2M7.3 5.6v4.2" stroke="#333" stroke-width="1.1"/></svg>
<svg class="a" style="left:1292px;top:472px;width:14px;height:13px" viewBox="0 0 14 13"><path d="M1.5 9.8V2.2a1.4 1.4 0 0 1 1.4-1.4h6.5a1.4 1.4 0 0 1 1.4 1.4" fill="none" stroke="#333" stroke-width="1.1"/><rect x="3.6" y="3.2" width="9.3" height="9.3" rx="1.6" fill="#fff" stroke="#333" stroke-width="1.1"/><path d="M5.8 7.8h5M8.3 5.3v5" stroke="#333" stroke-width="1"/></svg>
<svg class="a" style="left:1265px;top:504px;width:12px;height:13px" viewBox="0 0 12 13"><path d="M.8 3.5h10.4" stroke="#333" stroke-width="1.1"/><path d="M4.5 3.3V1.8a1 1 0 0 1 1-1h1a1 1 0 0 1 1 1v1.5" fill="none" stroke="#333" stroke-width="1"/><path d="M1.9 5v5.2a2 2 0 0 0 2 2h4.2a2 2 0 0 0 2-2V5" fill="none" stroke="#333" stroke-width="1.1"/><path d="M4.7 5.6v4.2M7.3 5.6v4.2" stroke="#333" stroke-width="1.1"/></svg>
<svg class="a" style="left:1292px;top:504px;width:14px;height:13px" viewBox="0 0 14 13"><path d="M1.5 9.8V2.2a1.4 1.4 0 0 1 1.4-1.4h6.5a1.4 1.4 0 0 1 1.4 1.4" fill="none" stroke="#333" stroke-width="1.1"/><rect x="3.6" y="3.2" width="9.3" height="9.3" rx="1.6" fill="#fff" stroke="#333" stroke-width="1.1"/><path d="M5.8 7.8h5M8.3 5.3v5" stroke="#333" stroke-width="1"/></svg>
<div class="a" style="left:1325px;top:238px;width:10px;height:281px;background:#f8f8f8;border-left:1px solid #f0f0f0"></div>
<div class="a" style="left:1325px;top:241px;width:7px;height:240px;background:#c1c1c1;border-radius:4px"></div>
<div class="a" style="left:1233px;top:534px;width:102px;height:32px;background:#fdf6e8;border-left:1px solid #e6e6e6;border-right:1px solid #e0e0e0;border-bottom:1px solid #e0e0e0"></div>
<!-- /TABLE -->

<!-- SUMMARY -->
<svg class="a" style="left:23px;top:583px;width:18px;height:18px" viewBox="0 0 18 18"><circle cx="9" cy="9" r="8.4" fill="none" stroke="#aaa" stroke-width="1"/><path d="M6.3 4.8L9 8.6l2.7-3.8M9 8.6v4.8M6.6 9.4h4.8M6.6 11.4h4.8" fill="none" stroke="#888" stroke-width=".9"/></svg>
<div class="a" style="left:42px;top:584px;font-size:13px;line-height:16px;color:#222">金额合计：</div>
<div class="a" style="left:108px;top:583px;font-size:16px;line-height:18px;color:#666">0.00</div>
<div class="a" style="left:151px;top:588px;width:14px;height:2px;background:#14b3a3"></div>
<svg class="a" style="left:176px;top:583px;width:18px;height:18px" viewBox="0 0 18 18"><circle cx="9" cy="9" r="8.4" fill="none" stroke="#aaa" stroke-width="1"/><path d="M10.5 4.5h3v3l-6 6-3-3z" fill="none" stroke="#999" stroke-width="1" stroke-linejoin="round"/><circle cx="11.6" cy="6.4" r=".7" fill="#999"/></svg>
<div class="a" style="left:195px;top:584px;font-size:13px;line-height:16px;color:#222">整单优惠：</div>
<div class="a" style="left:261px;top:583px;font-size:16px;line-height:18px;color:#111">0.00</div>
<div class="uline" style="left:260px;top:607px;width:120px"></div>
<svg class="a" style="left:380px;top:583px;width:14px;height:14px" viewBox="0 0 14 14"><circle cx="7" cy="7" r="6.3" fill="none" stroke="#333" stroke-width="1.1"/><path d="M5.1 5.4a1.9 1.9 0 1 1 2.7 1.7c-.6.3-.8.7-.8 1.3v.4" fill="none" stroke="#333" stroke-width="1.1"/><circle cx="7" cy="10.4" r=".75" fill="#333"/></svg>
<div class="a" style="left:404px;top:588px;width:14px;height:2.4px;background:#222"></div>
<div class="a" style="left:404px;top:593px;width:14px;height:2.4px;background:#222"></div>
<svg class="a" style="left:429px;top:583px;width:18px;height:18px" viewBox="0 0 18 18"><circle cx="9" cy="9" r="8.4" fill="none" stroke="#aaa" stroke-width="1"/><path d="M8 4.5l4.5 4.5-1.6 1.6-4.5-4.5z" fill="none" stroke="#999" stroke-width="1"/><path d="M8.7 9.2l-3.5 3.5" stroke="#999" stroke-width="1.4"/></svg>
<div class="a" style="left:448px;top:585px;font-size:13px;line-height:16px;color:#222">成交金额：</div>
<div class="a" style="left:513px;top:584px;font-size:14px;line-height:16px;color:#111">0.00</div>
<div class="uline" style="left:513px;top:608px;width:160px"></div>

<!-- FOOTER -->
<svg class="a" style="left:805px;top:666px;width:15px;height:15px" viewBox="0 0 15 15"><circle cx="7.5" cy="7.5" r="7" fill="none" stroke="#bbb" stroke-width="1"/><path d="M3.8 5.6h7.4v4.6a1 1 0 0 1-1 1H4.8a1 1 0 0 1-1-1z" fill="none" stroke="#aaa" stroke-width="1"/><path d="M3.8 5.6l1.2-1.4 1.3.9L7.5 3.6l1.2 1.5 1.3-.9 1.2 1.4" fill="none" stroke="#aaa" stroke-width=".9"/></svg>
<div class="a" style="left:822px;top:666px;font-size:13px;line-height:16px;color:#222">商品种类：</div>
<div class="a" style="left:887px;top:664px;font-size:14px;line-height:18px;color:#f77a3e">3</div>
<div class="a" style="left:901px;top:666px;font-size:13px;line-height:16px;color:#333">种</div>
<div class="a" style="left:971px;top:653px;width:82px;height:36px;border:1px solid #c8c8c8;border-radius:3px;background:#fff;color:#333;font-size:16px;line-height:36px;text-align:center">放弃</div>
<div class="a" style="left:1065px;top:653px;width:114px;height:36px;border:1px solid #4a9af0;border-radius:3px;background:#fff;color:#4a9af0;font-size:16px;line-height:36px;text-align:center">保存草稿</div>
<div class="a" style="left:1191px;top:652px;width:142px;height:36px;border-radius:3px;background:#5aa5f0"></div>
<div class="a" style="left:1216px;top:661px;font-size:16px;line-height:18px;color:#fff">保存&amp;新增</div>
<svg class="a" style="left:1297px;top:667px;width:10px;height:6px" viewBox="0 0 10 6"><path d="M.5 5.5L5 1l4.5 4.5" fill="none" stroke="#fff" stroke-width="1.2"/></svg>

<!-- right float panel -->
<div class="a" style="left:1340px;top:191px;width:35px;height:110px;background:#fff;box-shadow:-2px 0 8px rgba(0,0,0,.08)"></div>
<div class="a" style="left:1340px;top:227px;width:35px;height:1px;background:#e5e5e5"></div>
<div class="a" style="left:1340px;top:265px;width:35px;height:36px;background:#03d3b1"></div>
<svg class="a" style="left:1346px;top:195px;width:24px;height:24px" viewBox="0 0 24 24"><path d="M18.9 14.6V6.2a2 2 0 0 0-2-2H7.2a2 2 0 0 0-2 2v11.5a2 2 0 0 0 2 2h7.4z" fill="none" stroke="#555" stroke-width="1.25" stroke-linejoin="round"/><path d="M14.8 19.6v-2.6a1.3 1.3 0 0 1 1.3-1.3h2.7" fill="none" stroke="#555" stroke-width="1.2"/><path d="M8.1 8h6.8M8.1 10.5h5.4M8.1 13.2h6.8" stroke="#555" stroke-width="1.2"/></svg>
<svg class="a" style="left:1346px;top:232px;width:24px;height:24px" viewBox="0 0 24 24"><path d="M16.9 11.2A3.3 3.3 0 0 0 12.6 6.4L6.1 12.9A3.6 3.6 0 0 0 11.2 18L14 15.2A1.84 1.84 0 0 0 11.4 12.6L8.9 14.8" fill="none" stroke="#555" stroke-width="1.3" stroke-linecap="round"/></svg>
<svg class="a" style="left:1346px;top:269px;width:24px;height:24px" viewBox="0 0 24 24"><g fill="none" stroke="#fff" stroke-width="1.3"><path d="M4.6 11.8V6.3a1.7 1.7 0 0 1 1.7-1.7h5.5"/><path d="M19.6 12.2v5.7a1.7 1.7 0 0 1-1.7 1.7h-5.7"/><path d="M15 4.6h4.6v4.6M19.4 4.8l-6.1 6.1M4.6 15v4.6h4.6M4.8 19.4l6.1-6.1"/></g></svg>

<!-- green dot behind dropdown -->
<div class="a" style="left:1136px;top:84px;width:13px;height:13px;border-radius:50%;background:#5fd6b8"></div>

<!-- toast -->
<div class="a" style="left:1033px;top:129px;width:219px;height:62px;background:#03d0ae;border-radius:4px"></div>
<div class="a" style="left:1047px;top:142px;width:4px;height:12px;background:#fff"></div>
<div class="a" style="left:1057px;top:140px;font-size:14px;line-height:21px;color:#fff">以销定采，您可以通过选<br>单将商品快速带入</div>

<!-- dropdown -->
<div class="a" style="left:1136px;top:89px;width:116px;height:84px;background:#fff;border-radius:4px;box-shadow:0 2px 8px rgba(0,0,0,.15)"></div>
<svg class="a" style="left:1188px;top:84px;width:12px;height:6px" viewBox="0 0 12 6"><path d="M0 6L6 0l6 6z" fill="#fff"/></svg>
<svg class="a" style="left:1156px;top:100px;width:13px;height:13px" viewBox="0 0 13 13"><path d="M11.6 7.5A5.2 5.2 0 1 1 8.5 1.7" fill="none" stroke="#5aa5f0" stroke-width="1.1"/><path d="M4.3 3.8l2 2.3 2-2.3M6.3 6.1v4M4.5 6.9h3.6M4.5 8.5h3.6M10.5 .5v3M9 2h3" fill="none" stroke="#5aa5f0" stroke-width="1"/></svg>
<div class="a" style="left:1172px;top:100px;font-size:12px;line-height:16px;color:#333">重新取价</div>
<svg class="a" style="left:1156px;top:124px;width:13px;height:13px" viewBox="0 0 13 13"><path d="M11.2 9A5.2 5.2 0 1 1 11.6 5" fill="none" stroke="#5aa5f0" stroke-width="1.1"/><path d="M6.3 10V3.5M4 5.8l2.3-2.3 2.3 2.3" fill="none" stroke="#5aa5f0" stroke-width="1.1"/><path d="M9.3 10.2h3M9.3 12h3" stroke="#5aa5f0" stroke-width="1"/></svg>
<div class="a" style="left:1172px;top:124px;font-size:12px;line-height:16px;color:#333">可用量提取</div>
<svg class="a" style="left:1157px;top:148px;width:11px;height:13px" viewBox="0 0 11 13"><path d="M5.5 12.3S1 8 1 5.2a4.5 4.5 0 0 1 9 0C10 8 5.5 12.3 5.5 12.3z" fill="none" stroke="#5aa5f0" stroke-width="1.1"/><circle cx="5.5" cy="5.2" r="1.7" fill="none" stroke="#5aa5f0" stroke-width="1.1"/></svg>
<div class="a" style="left:1172px;top:148px;font-size:12px;line-height:16px;color:#333">定位</div>

</body></html>
